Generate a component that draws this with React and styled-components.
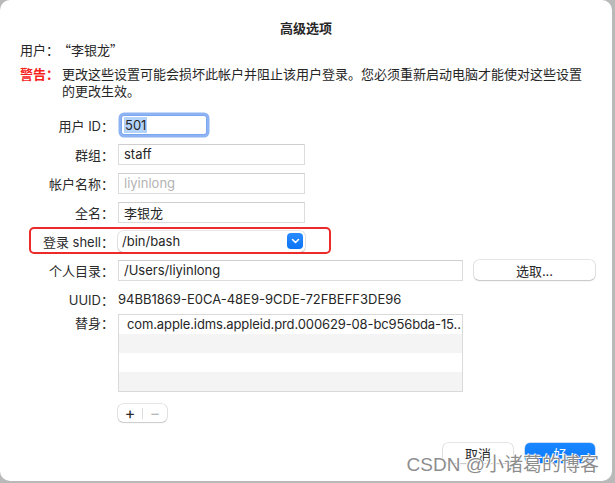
import React from "react";
import styled, { createGlobalStyle } from "styled-components";

const GlobalStyle = createGlobalStyle`
  html, body {
    margin: 0;
    padding: 0;
    background: #b9b9b9;
  }
  body {
    font-family: "Inter", "Noto Sans CJK SC", sans-serif;
    font-size: 13px;
    color: #262626;
  }
`;

const aliases = ["com.apple.idms.appleid.prd.000629-08-bc956bda-15..", "", "", ""];

const App = () => {
  return (
    <>
      <GlobalStyle />
      <Sheet>
        <Title>高级选项</Title>
        <UserLine>
          <Lead>用户：</Lead>
          <Quoted>“李银龙”</Quoted>
        </UserLine>
        <Warning>
          <Lead $warn>警告：</Lead>
          <WarnText>
            更改这些设置可能会损坏此帐户并阻止该用户登录。您必须重新启动电脑才能使对这些设置的更改生效。
          </WarnText>
        </Warning>

        <Form>
          <Row>
            <Label>用户 ID：</Label>
            <Field $w={86} $focused>
              <Selected>501</Selected>
            </Field>
          </Row>
          <Row>
            <Label>群组：</Label>
            <Field $w={187}>staff</Field>
          </Row>
          <Row>
            <Label>帐户名称：</Label>
            <Field $w={187} $disabled>liyinlong</Field>
          </Row>
          <Row>
            <Label>全名：</Label>
            <Field $w={187}>李银龙</Field>
          </Row>
          <Row>
            <Label>登录 shell：</Label>
            <Popup>
              <span>/bin/bash</span>
              <Chevron>
                <svg width="9" height="6" viewBox="0 0 9 6">
                  <path d="M1.5 1.5 L4.5 4.5 L7.5 1.5" fill="none" stroke="#fff" strokeWidth="1.6" strokeLinecap="round" strokeLinejoin="round" />
                </svg>
              </Chevron>
            </Popup>
            <Highlight />
          </Row>
          <Row>
            <Label>个人目录：</Label>
            <Field $w={345}>/Users/liyinlong</Field>
            <PushButton $w={121}>选取...</PushButton>
          </Row>
          <Row>
            <Label>UUID：</Label>
            <span>94BB1869-E0CA-48E9-9CDE-72FBEFF3DE96</span>
          </Row>
          <ListRow>
            <Label $top>替身：</Label>
            <ListBox>
              {aliases.map((a, i) => (
                <ListItem key={`${i}alias`} $odd={i % 2 === 1}>
                  {a}
                </ListItem>
              ))}
            </ListBox>
          </ListRow>
          <AddRemove>
            <Seg>+</Seg>
            <SegDivider />
            <Seg $muted>−</Seg>
          </AddRemove>
        </Form>

        <Footer>
          <PushButton $w={70}>取消</PushButton>
          <PushButton $w={70} $primary>
            好
          </PushButton>
        </Footer>
        <Watermark>CSDN @小诸葛的博客</Watermark>
      </Sheet>
    </>
  );
};

export default App;

const Sheet = styled.div`
  position: relative;
  box-sizing: border-box;
  width: 612px;
  height: 481px;
  background: #ffffff;
  border-radius: 10px;
  padding-top: 19px;
  padding-bottom: 18px;
  display: flex;
  flex-direction: column;
  overflow: hidden;
`;

const Title = styled.div`
  text-align: center;
  font-weight: 700;
  line-height: 18px;
`;

const UserLine = styled.div`
  margin-top: 4px;
  padding-left: 20px;
  line-height: 18px;
  display: flex;
`;

const Lead = styled.span`
  flex-shrink: 0;
  width: 42px;
  white-space: nowrap;
  color: ${(p) => (p.$warn ? "#f5221b" : "inherit")};
  font-weight: ${(p) => (p.$warn ? 700 : 400)};
`;

const Quoted = styled.span`
  font-family: "Noto Sans CJK SC", sans-serif;
  margin-left: -4px;
`;

const Warning = styled.div`
  margin-top: 7px;
  padding-left: 20px;
  display: flex;
  line-height: 17px;
`;

const WarnText = styled.span`
  width: 525px;
`;

const Form = styled.div`
  margin-top: 11px;
  display: flex;
  flex-direction: column;
  gap: 1px;
`;

const Row = styled.div`
  position: relative;
  height: 28px;
  display: flex;
  align-items: center;
  gap: 11px;
`;

const Label = styled.div`
  width: 114px;
  margin-right: -7px;
  text-align: right;
  flex-shrink: 0;
  color: #2b2b2b;
  white-space: nowrap;
  align-self: ${(p) => (p.$top ? "flex-start" : "center")};
  line-height: ${(p) => (p.$top ? "19px" : "normal")};
`;

const Field = styled.div`
  box-sizing: border-box;
  width: ${(p) => p.$w}px;
  height: ${(p) => (p.$focused ? "20px" : "21px")};
  margin-left: ${(p) => (p.$focused ? "3px" : "0")};
  padding: 0 5px;
  display: flex;
  align-items: center;
  background: #fff;
  border: 1px solid ${(p) => (p.$focused ? "#7aa7f0" : "#dcdcdc")};
  border-top-color: ${(p) => (p.$focused ? "#7aa7f0" : "#cfcfcf")};
  border-radius: ${(p) => (p.$focused ? "3px" : "0")};
  box-shadow: ${(p) => (p.$focused ? "0 0 0 2.5px #8db3f3" : "none")};
  color: ${(p) => (p.$disabled ? "#b4b4b4" : "#262626")};
`;

const Selected = styled.span`
  background: #b3d3fb;
  padding: 0 1px;
  margin-left: -3px;
`;

const Popup = styled.div`
  box-sizing: border-box;
  width: 187px;
  height: 21px;
  padding: 0 2px 0 4px;
  display: flex;
  align-items: center;
  justify-content: space-between;
  background: #fff;
  border-radius: 5px;
  box-shadow: 0 0 0 0.5px rgba(0, 0, 0, 0.18), 0 1px 1.5px rgba(0, 0, 0, 0.18);
`;

const Chevron = styled.span`
  width: 16px;
  height: 16px;
  border-radius: 4px;
  background: linear-gradient(#2b8cff, #0a73f5);
  display: flex;
  align-items: center;
  justify-content: center;
`;

const Highlight = styled.span`
  position: absolute;
  left: 29px;
  top: 0;
  width: 302px;
  height: 27px;
  box-sizing: border-box;
  border: 2px solid #ec2a2a;
  border-radius: 5px;
  pointer-events: none;
`;

const PushButton = styled.div`
  box-sizing: border-box;
  width: ${(p) => p.$w}px;
  height: 20px;
  display: flex;
  align-items: center;
  justify-content: center;
  border-radius: 5px;
  background: ${(p) => (p.$primary ? "linear-gradient(#1a87ff, #0a7aff)" : "#fff")};
  color: ${(p) => (p.$primary ? "#fff" : "#262626")};
  box-shadow: ${(p) =>
    p.$primary
      ? "0 0 0 0.5px rgba(0, 80, 200, 0.4)"
      : "0 0 0 0.5px rgba(0, 0, 0, 0.2), 0 1px 1.5px rgba(0, 0, 0, 0.15)"};
`;

const ListRow = styled.div`
  display: flex;
  gap: 11px;
`;

const ListBox = styled.div`
  box-sizing: border-box;
  width: 345px;
  border: 1px solid #dadada;
  display: flex;
  flex-direction: column;
`;

const ListItem = styled.div`
  height: 19px;
  line-height: 19px;
  padding-left: 8px;
  white-space: nowrap;
  overflow: hidden;
  letter-spacing: -0.12px;
  background: ${(p) => (p.$odd ? "#f4f4f4" : "#fff")};
`;

const AddRemove = styled.div`
  margin: 11px 0 0 118px;
  width: 49px;
  height: 18px;
  box-sizing: border-box;
  display: flex;
  align-items: center;
  border-radius: 5px;
  box-shadow: 0 0 0 0.5px rgba(0, 0, 0, 0.2), 0 1px 1.5px rgba(0, 0, 0, 0.12);
`;

const Seg = styled.span`
  flex: 1;
  text-align: center;
  font-size: 16px;
  line-height: 18px;
  color: ${(p) => (p.$muted ? "#b8b8b8" : "#2a2a2a")};
`;

const SegDivider = styled.span`
  width: 1px;
  height: 11px;
  background: #dcdcdc;
`;

const Footer = styled.div`
  margin-top: auto;
  display: flex;
  justify-content: flex-end;
  gap: 12px;
  padding-right: 17px;
`;

const Watermark = styled.div`
  position: absolute;
  right: 13px;
  bottom: 5px;
  font-family: "Liberation Sans", "Noto Sans CJK SC", sans-serif;
  font-size: 19px;
  color: rgba(120, 120, 120, 0.85);
  text-shadow: 0 0 1px #fff, 1px 1px 0 #fff, -1px -1px 0 #fff;
  pointer-events: none;
`;
